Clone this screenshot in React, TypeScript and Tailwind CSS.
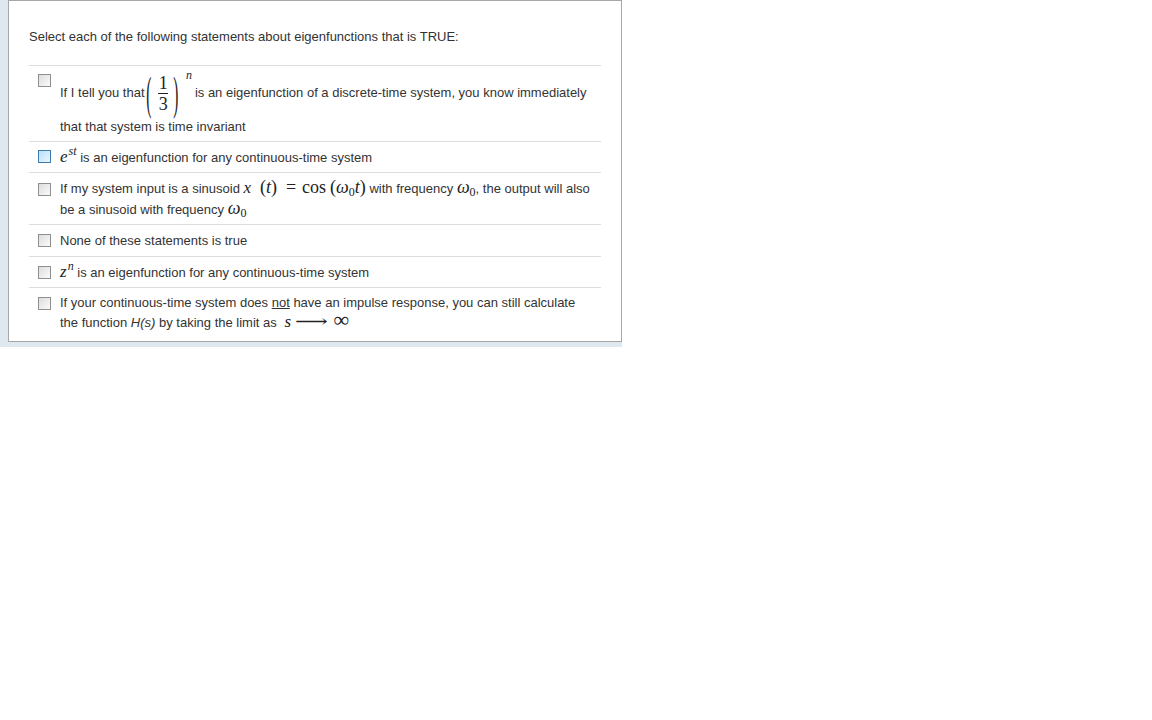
import React from "react";

const serif = "font-['Liberation_Serif','DejaVu_Serif',serif]";

function Box({ hover = false, top }: { hover?: boolean; top: string }) {
  return (
    <span
      className={`${top} block w-[13px] h-[13px] shrink-0 border ${
        hover
          ? "border-[#3d7bad] bg-gradient-to-br from-[#b9dffb] to-[#e9f6fe]"
          : "border-[#8f8f8f] bg-gradient-to-br from-[#dcdcdc] to-[#fbfbfb]"
      }`}
    />
  );
}

// (1/3)^n drawn with text, the big parentheses stretched
function OneThirdN() {
  return (
    <span className={`${serif} inline-flex items-center h-[47px] ml-[1px] text-[#222]`}>
      <span className="inline-block text-[17px] leading-none scale-y-[2.75] scale-x-[0.9]">(</span>
      <span className="inline-flex flex-col items-center ml-[7px] mr-[5px] text-[18px] leading-[20px]">
        <span>1</span>
        <span className="block h-px w-[10px] bg-[#222]" />
        <span>3</span>
      </span>
      <span className="inline-block text-[17px] leading-none scale-y-[2.75] scale-x-[0.9]">)</span>
      <span className="self-start -mt-[1px] ml-[7px] mr-[3px] text-[12px] italic leading-none">n</span>
    </span>
  );
}

function Row({
  children,
  hover,
  className,
  box,
}: {
  children: React.ReactNode;
  hover?: boolean;
  className: string;
  box: string;
}) {
  return (
    <div className={`flex border-t border-[#dddddd] ${className}`}>
      <div className="w-[31px] shrink-0 pl-[9px]">
        <Box hover={hover} top={box} />
      </div>
      <div className="flex-1">{children}</div>
    </div>
  );
}

function W0() {
  return (
    <span className={`${serif} text-[18px] leading-[0] text-[#222]`}>
      <i>ω</i>
      <sub className="text-[12px] -bottom-[3px]">0</sub>
    </span>
  );
}

export default function App() {
  return (
    <div className="min-h-screen bg-white font-['Liberation_Sans',Arial,sans-serif] text-[13px] text-[#333]">
      <div className="w-[622px] bg-[#dfe8ef] pl-2 pb-[5px]">
        <div className="border border-[#a7a7a7] bg-white px-5 pt-[28px]">
          <p className="leading-[15px] mb-[21px]">
            Select each of the following statements about eigenfunctions that is TRUE:
          </p>

          <Row className="pt-[4px] pb-[4px]" box="mt-[4px]">
            <div className="leading-[20px]">
              <div className="flex items-center h-[46px] whitespace-nowrap">
                <span>If I tell you that</span>
                <OneThirdN />
                <span>is an eigenfunction of a discrete-time system, you know immediately</span>
              </div>
              <div className="pt-[1px]">that that system is time invariant</div>
            </div>
          </Row>

          <Row hover className="pt-[8px] pb-[7px]" box="mt-[0px]">
            <div className="leading-[15px]">
              <span className={`${serif} italic text-[17px] leading-[0] text-[#222]`}>
                e<sup className="text-[12px] -top-[7px] ml-[1px]">st</sup>
              </span>{" "}
              is an eigenfunction for any continuous-time system
            </div>
          </Row>

          <Row className="pt-[5px] pb-[4px]" box="mt-[5px]">
            <div className="leading-[21px]">
              If my system input is a sinusoid{" "}
              <span className={`${serif} text-[18px] leading-[0] text-[#222]`}>
                <i className="text-[17px]">x</i>
                <span className="ml-[9px]">(</span>
                <i>t</i>)<span className="inline-block w-[14px] ml-[7px] mr-[4px] text-center">=</span>cos
                <span className="ml-[4px]">(</span>
                <i>ω</i>
                <sub className="text-[12px] -bottom-[3px]">0</sub>
                <i>t</i>)
              </span>{" "}
              with frequency <W0 />, the output will also
              <br />
              be a sinusoid with frequency <W0 />
            </div>
          </Row>

          <Row className="pt-[8px] pb-[8px]" box="mt-[1px]">
            <div className="leading-[15px]">None of these statements is true</div>
          </Row>

          <Row className="pt-[8px] pb-[7px]" box="mt-[1px]">
            <div className="leading-[15px]">
              <span className={`${serif} italic text-[17px] leading-[0] text-[#222]`}>
                z<sup className="text-[12px] -top-[7px] ml-[1px]">n</sup>
              </span>{" "}
              is an eigenfunction for any continuous-time system
            </div>
          </Row>

          <Row className="pt-[5px] pb-[8px]" box="mt-[4px]">
            <div className="leading-[20px]">
              If your continuous-time system does <u>not</u> have an impulse response, you can still calculate
              <br />
              the function <i>H(s)</i> by taking the limit as{" "}
              <span className={`${serif} text-[17px] leading-[0] text-[#222]`}>
                <i className="ml-[4px]">s</i>
                <span className="inline-block ml-[4px] mr-[8px] origin-left scale-x-[1.35]">⟶</span>
                <span className="ml-[6px] text-[22px]">∞</span>
              </span>
            </div>
          </Row>
        </div>
      </div>
    </div>
  );
}
